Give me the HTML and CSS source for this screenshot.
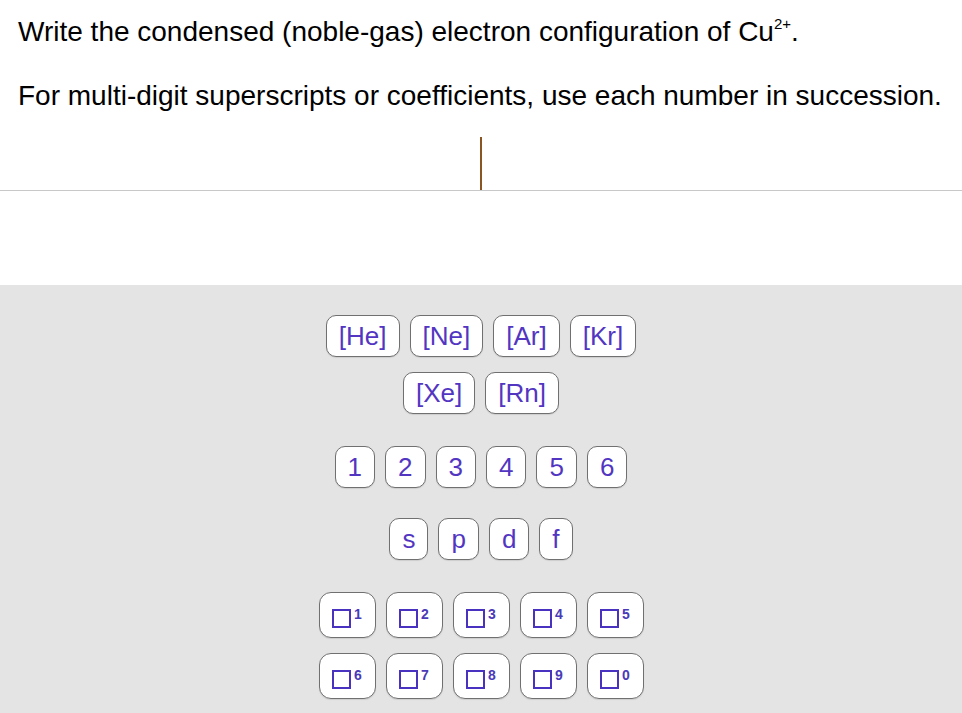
FILE: index.html
```html
<!DOCTYPE html>
<html>
<head>
<meta charset="utf-8">
<link rel="stylesheet" href="styles.css">
</head>
<body>
<div class="question">
  <p class="prompt">Write the condensed (noble-gas) electron configuration of Cu<sup class="charge">2+</sup>.</p>
  <p class="prompt second">For multi-digit superscripts or coefficients, use each number in succession.</p>
</div>
<div class="answer"><span class="cursor"></span></div>
<div class="spacer"></div>
<div class="keypad">
  <div class="row row-gases">
    <button class="key">[He]</button>
    <button class="key">[Ne]</button>
    <button class="key">[Ar]</button>
    <button class="key">[Kr]</button>
  </div>
  <div class="row row-gases2">
    <button class="key">[Xe]</button>
    <button class="key">[Rn]</button>
  </div>
  <div class="row row-nums">
    <button class="key">1</button>
    <button class="key">2</button>
    <button class="key">3</button>
    <button class="key">4</button>
    <button class="key">5</button>
    <button class="key">6</button>
  </div>
  <div class="row row-orb">
    <button class="key">s</button>
    <button class="key">p</button>
    <button class="key">d</button>
    <button class="key">f</button>
  </div>
  <div class="row row-sup">
    <button class="key sup-key"><span class="box"></span><span class="exp">1</span></button>
    <button class="key sup-key"><span class="box"></span><span class="exp">2</span></button>
    <button class="key sup-key"><span class="box"></span><span class="exp">3</span></button>
    <button class="key sup-key"><span class="box"></span><span class="exp">4</span></button>
    <button class="key sup-key"><span class="box"></span><span class="exp">5</span></button>
  </div>
  <div class="row row-sup2">
    <button class="key sup-key"><span class="box"></span><span class="exp">6</span></button>
    <button class="key sup-key"><span class="box"></span><span class="exp">7</span></button>
    <button class="key sup-key"><span class="box"></span><span class="exp">8</span></button>
    <button class="key sup-key"><span class="box"></span><span class="exp">9</span></button>
    <button class="key sup-key"><span class="box"></span><span class="exp">0</span></button>
  </div>
</div>
</body>
</html>
```
FILE: styles.css
```css
html, body {
  margin: 0;
  padding: 0;
  background: #ffffff;
  font-family: "Liberation Sans", Arial, sans-serif;
  color: #000;
}

.question {
  padding: 16px 18px 0 18px;
}

.prompt {
  margin: 0;
  font-size: 28px;
  line-height: 32px;
  white-space: nowrap;
}

.prompt.second {
  margin-top: 32px;
}

.charge {
  font-size: 15px;
  line-height: 0;
  vertical-align: 12px;
}

.answer {
  margin-top: 25px;
  height: 53px;
  border-bottom: 1px solid #c8c8c8;
  display: flex;
  justify-content: center;
  align-items: flex-end;
}

.cursor {
  display: block;
  width: 2px;
  height: 53px;
  background: #8a5520;
}

.spacer {
  height: 94px;
}

.keypad {
  background: #e4e4e4;
  height: 428px;
  box-sizing: border-box;
  padding-top: 30px;
  display: flex;
  flex-direction: column;
  align-items: center;
}

.row {
  display: flex;
  gap: 10px;
  justify-content: center;
}

.row-gases2 { margin-top: 15px; }
.row-nums { margin-top: 32px; }
.row-orb { margin-top: 30px; }
.row-sup { margin-top: 32px; }
.row-sup2 { margin-top: 15px; }

.key {
  height: 42px;
  box-sizing: border-box;
  padding: 0 12px;
  border: 1px solid #707070;
  border-radius: 10px;
  background: #ffffff;
  font-family: "Liberation Sans", Arial, sans-serif;
  font-size: 26px;
  color: #5236c2;
  display: flex;
  align-items: center;
  justify-content: center;
  box-shadow: 0 1px 1px rgba(0,0,0,0.1);
}

.sup-key {
  width: 57px;
  height: 46px;
  padding: 0;
  border-radius: 12px;
  align-items: flex-start;
  padding-top: 15px;
  gap: 3px;
}

.box {
  display: block;
  width: 19px;
  height: 19px;
  box-sizing: border-box;
  border: 2px solid #4a32c0;
  margin-top: 1px;
}

.exp {
  font-size: 14px;
  font-weight: bold;
  line-height: 14px;
  color: #4a3ab8;
  margin-top: -1px;
}
```
